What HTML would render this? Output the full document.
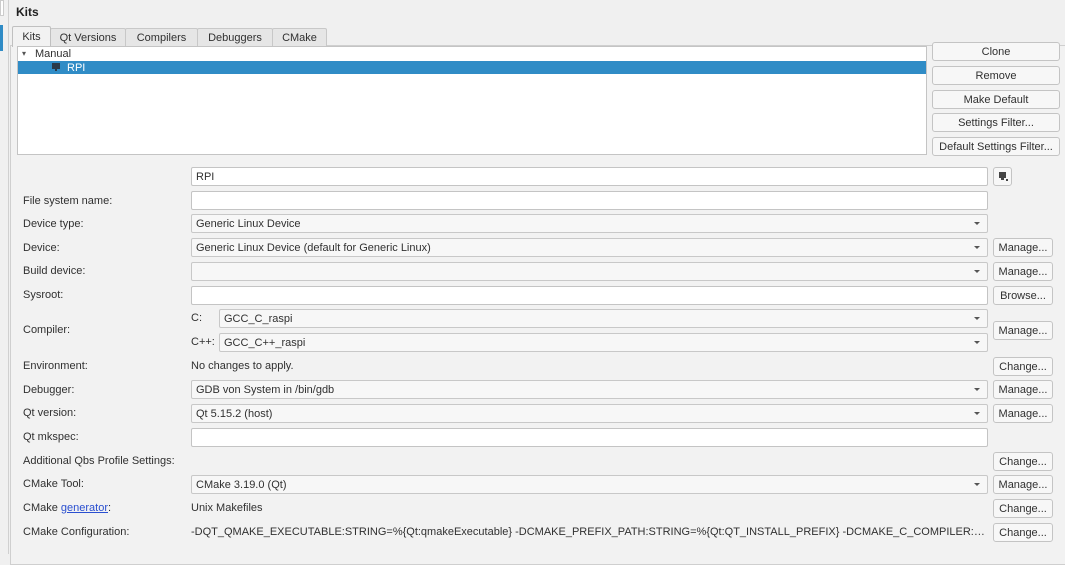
<!DOCTYPE html>
<html><head><meta charset="utf-8"><style>
*{box-sizing:border-box;margin:0;padding:0}
body{width:1065px;height:554px;background:#f0f0f0;font-family:"Liberation Sans","DejaVu Sans",sans-serif;font-size:11px;color:#303030;position:relative;overflow:hidden}
.a{position:absolute}
.tab{position:absolute;top:28px;height:18px;border:1px solid #c8c8c8;border-bottom:none;background:#e6e6e6;text-align:center;line-height:19px;border-radius:2px 2px 0 0}
.btn{position:absolute;border:1px solid #c4c4c4;background:#f7f7f7;border-radius:3px;text-align:center;line-height:19px;height:19px}
.le{position:absolute;left:191px;width:797px;height:19px;border:1px solid #c4c4c4;background:#fff;border-radius:2px;padding-left:4px;line-height:18px}
.cb{position:absolute;left:191px;width:797px;height:19px;border:1px solid #c8c8c8;background:#f7f7f7;border-radius:2px;padding-left:4px;line-height:18px}
.cb:after{content:"";position:absolute;right:7px;top:7px;border-left:3px solid transparent;border-right:3px solid transparent;border-top:3px solid #555}
.lab{position:absolute;left:23px;line-height:16px}
.mb{left:993px;width:60px}
</style></head><body>
<div class="a" style="left:0;top:0;width:4px;height:16px;background:#fff;border:1px solid #ccc"></div>
<div class="a" style="left:0;top:25px;width:3px;height:26px;background:#308cc6"></div>
<div class="a" style="left:8px;top:0;width:1px;height:554px;background:#d0d0d0"></div>
<div class="a" style="left:16px;top:5px;font-weight:bold;font-size:12px;color:#222">Kits</div>
<div class="a" style="left:10px;top:45px;width:1060px;height:520px;border:1px solid #cfcfcf;background:#f2f2f2"></div>
<div class="tab" style="left:50px;width:76px">Qt Versions</div>
<div class="tab" style="left:125px;width:73px">Compilers</div>
<div class="tab" style="left:197px;width:76px">Debuggers</div>
<div class="tab" style="left:272px;width:55px">CMake</div>
<div class="tab" style="left:12px;width:39px;top:26px;height:21px;background:#f2f2f2;border-color:#c0c0c0;line-height:21px">Kits</div>
<div class="a" style="left:17px;top:46px;width:910px;height:109px;background:#fff;border:1px solid #c4c4c4"></div>
<div class="a" style="left:22px;top:49px;font-size:8px;color:#555">▾</div>
<div class="a" style="left:35px;top:48px">Manual</div>
<div class="a" style="left:18px;top:61px;width:908px;height:13px;background:#308cc6"></div>
<svg class="a" style="left:51px;top:62px" width="10" height="10"><rect x="1" y="1" width="8" height="6" fill="#2a3a4a"/><rect x="4" y="7" width="2" height="2" fill="#2a3a4a"/></svg>
<div class="a" style="left:67px;top:62px;color:#fff">RPI</div>
<div class="btn" style="left:932px;top:42px;width:128px">Clone</div>
<div class="btn" style="left:932px;top:66px;width:128px">Remove</div>
<div class="btn" style="left:932px;top:90px;width:128px">Make Default</div>
<div class="btn" style="left:932px;top:113px;width:128px">Settings Filter...</div>
<div class="btn" style="left:932px;top:137px;width:128px">Default Settings Filter...</div>

<div class="le" style="top:167px">RPI</div>
<div class="btn" style="left:993px;top:167px;width:19px"><svg width="12" height="12" style="margin-top:3px"><rect x="2" y="1" width="7" height="6" fill="#444"/><rect x="4" y="7" width="3" height="2" fill="#444"/><rect x="9" y="8" width="2" height="2" fill="#444"/></svg></div>
<div class="lab" style="top:193px">File system name:</div><div class="le" style="top:191px"></div>
<div class="lab" style="top:216px">Device type:</div><div class="cb" style="top:214px">Generic Linux Device</div>
<div class="lab" style="top:240px">Device:</div><div class="cb" style="top:238px">Generic Linux Device (default for Generic Linux)</div><div class="btn mb" style="top:238px">Manage...</div>
<div class="lab" style="top:263px">Build device:</div><div class="cb" style="top:262px"></div><div class="btn mb" style="top:262px">Manage...</div>
<div class="lab" style="top:287px">Sysroot:</div><div class="le" style="top:286px"></div><div class="btn mb" style="top:286px">Browse...</div>
<div class="lab" style="top:322px">Compiler:</div>
<div class="a" style="left:191px;top:312px">C:</div><div class="cb" style="top:309px;left:219px;width:769px">GCC_C_raspi</div>
<div class="a" style="left:191px;top:336px">C++:</div><div class="cb" style="top:333px;left:219px;width:769px">GCC_C++_raspi</div>
<div class="btn mb" style="top:321px">Manage...</div>
<div class="lab" style="top:358px">Environment:</div><div class="a" style="left:191px;top:360px">No changes to apply.</div><div class="btn mb" style="top:357px">Change...</div>
<div class="lab" style="top:382px">Debugger:</div><div class="cb" style="top:380px">GDB von System in /bin/gdb</div><div class="btn mb" style="top:380px">Manage...</div>
<div class="lab" style="top:405px">Qt version:</div><div class="cb" style="top:404px">Qt 5.15.2 (host)</div><div class="btn mb" style="top:404px">Manage...</div>
<div class="lab" style="top:429px">Qt mkspec:</div><div class="le" style="top:428px"></div>
<div class="lab" style="top:453px">Additional Qbs Profile Settings:</div><div class="btn mb" style="top:452px">Change...</div>
<div class="lab" style="top:476px">CMake Tool:</div><div class="cb" style="top:475px">CMake 3.19.0 (Qt)</div><div class="btn mb" style="top:475px">Manage...</div>
<div class="lab" style="top:500px">CMake <span style="color:#2a4fd0;text-decoration:underline">generator</span>:</div><div class="a" style="left:191px;top:502px">Unix Makefiles</div><div class="btn mb" style="top:499px">Change...</div>
<div class="lab" style="top:524px">CMake Configuration:</div><div class="a" style="left:191px;top:526px;width:797px;white-space:nowrap;overflow:hidden;text-overflow:ellipsis">-DQT_QMAKE_EXECUTABLE:STRING=%{Qt:qmakeExecutable} -DCMAKE_PREFIX_PATH:STRING=%{Qt:QT_INSTALL_PREFIX} -DCMAKE_C_COMPILER:STRING=%{Compiler:Executable:C}</div><div class="btn mb" style="top:523px">Change...</div>
</body></html>
